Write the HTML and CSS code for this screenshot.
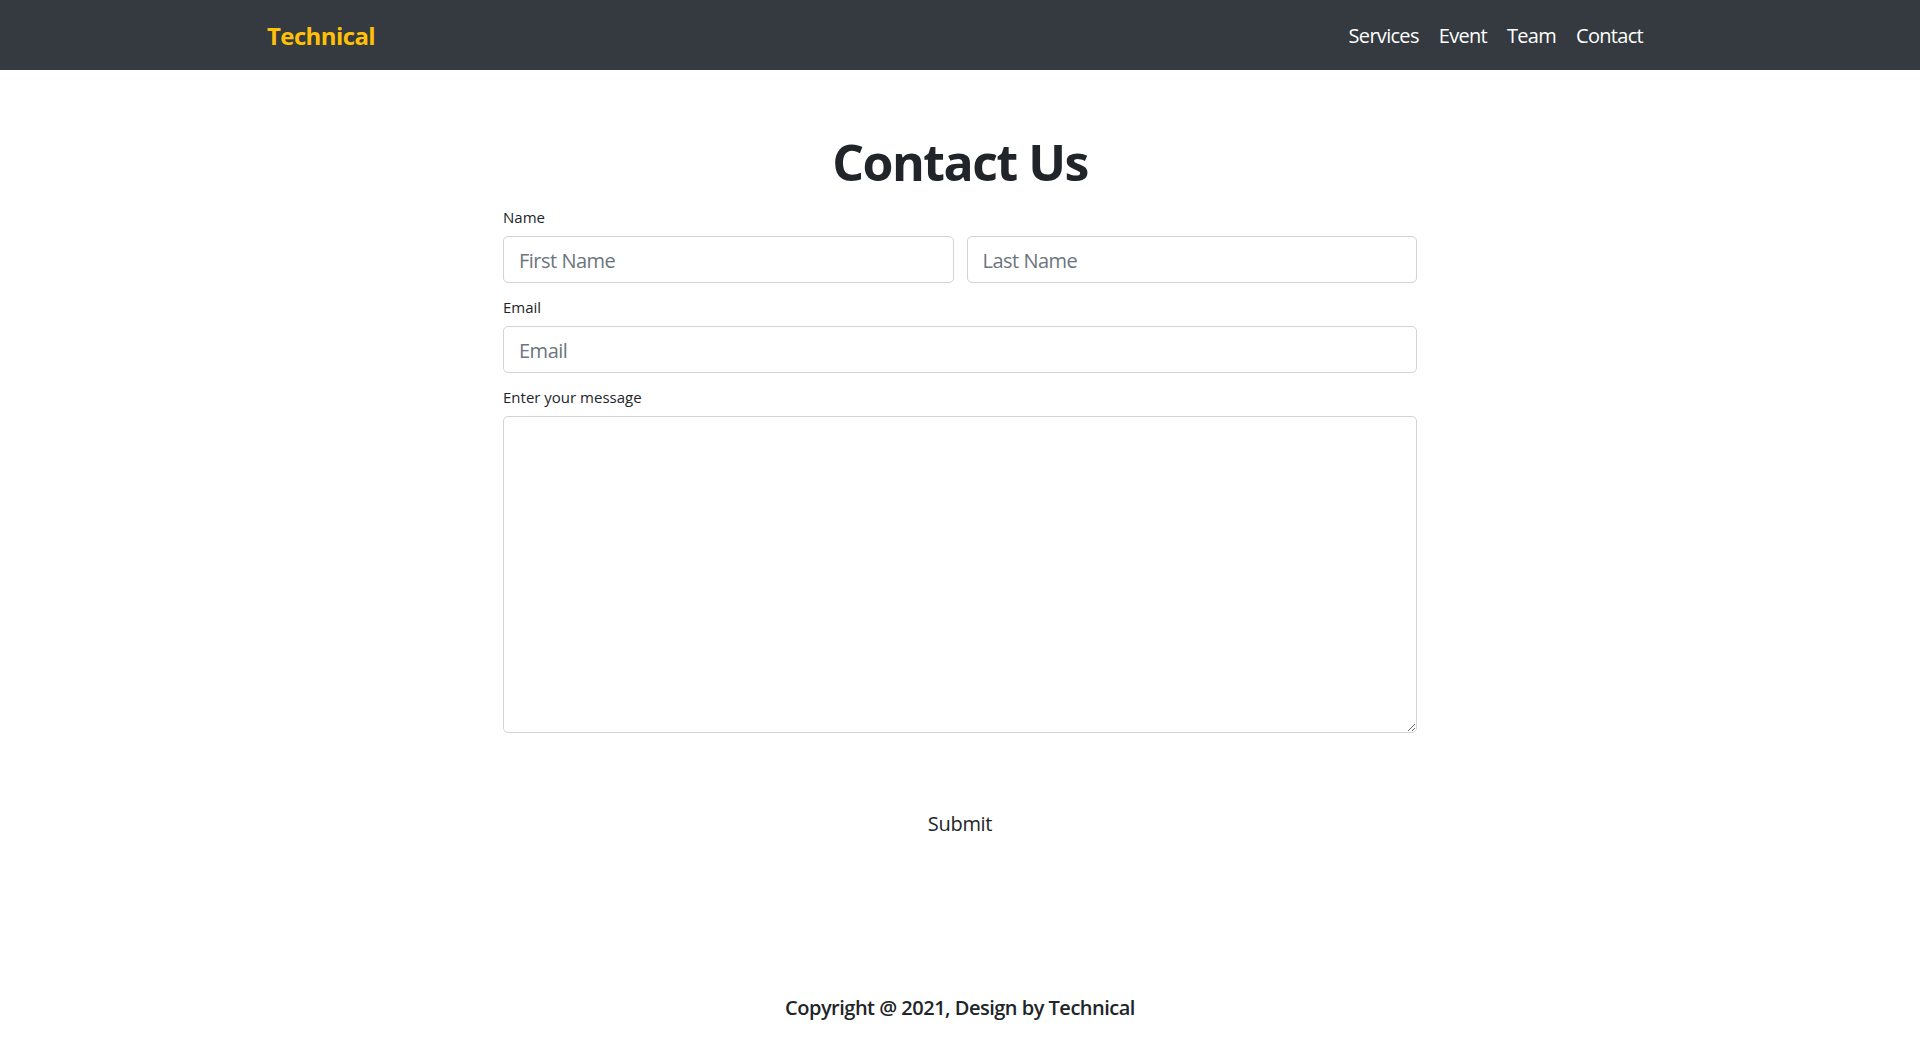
FILE: index.html
```html
<!DOCTYPE html>
<html lang="en">
<head>
<meta charset="utf-8">
<title>Contact Us - Technical</title>
<link rel="stylesheet" href="styles.css">
</head>
<body>
<nav class="navbar">
  <div class="nav-inner">
    <a class="brand" href="#">Technical</a>
    <ul class="nav-links">
      <li><a href="#">Services</a></li>
      <li><a href="#">Event</a></li>
      <li><a href="#">Team</a></li>
      <li><a href="#">Contact</a></li>
    </ul>
  </div>
</nav>
<main class="contact">
  <h1 class="title">Contact Us</h1>
  <form class="form">
    <div class="group">
      <label class="label">Name</label>
      <div class="row-2">
        <input class="control" type="text" placeholder="First Name">
        <input class="control" type="text" placeholder="Last Name">
      </div>
    </div>
    <div class="group">
      <label class="label">Email</label>
      <input class="control" type="email" placeholder="Email">
    </div>
    <div class="group">
      <label class="label">Enter your message</label>
      <textarea class="control area"></textarea>
    </div>
    <div class="submit-row">
      <button class="submit-btn" type="button">Submit</button>
    </div>
  </form>
</main>
<footer class="footer">
  <p class="copy">Copyright @ 2021, Design by Technical</p>
</footer>
</body>
</html>
```
FILE: styles.css
```css
* { box-sizing: border-box; }
html, body { margin: 0; padding: 0; }
body {
  font-family: "Open Sans", "Noto Sans", sans-serif;
  font-size: 20px;
  line-height: 1.5;
  color: #212529;
  background: #fff;
}
.navbar {
  background: #343a40;
  height: 70px;
}
.nav-inner {
  width: 1386px;
  height: 100%;
  margin: 0 auto;
  padding-top: 2px;
  display: flex;
  align-items: center;
  justify-content: space-between;
}
.brand {
  color: #ffc107;
  font-size: 24px;
  font-weight: 700;
  text-decoration: none;
  letter-spacing: -0.6px;
}
.nav-links {
  list-style: none;
  display: flex;
  margin: 0;
  padding: 0;
}
.nav-links a {
  display: block;
  padding: 10px 10px;
  color: #fff;
  text-decoration: none;
  font-size: 20px;
  letter-spacing: -0.7px;
}
.contact {
  width: 914px;
  margin: 0 auto;
}
.title {
  margin: 62px 0 14px;
  text-align: center;
  font-size: 50px;
  line-height: 1.2;
  font-weight: 700;
  letter-spacing: -1.5px;
  color: #212529;
}
.form { margin: 0; }
.group { margin-bottom: 13px; }
.label {
  display: block;
  font-size: 15px;
  line-height: 22px;
  margin-bottom: 8px;
  color: #212529;
}
.row-2 {
  display: grid;
  grid-template-columns: 1fr 1fr;
  gap: 13px;
}
.control {
  display: block;
  width: 100%;
  height: 47px;
  padding: 2px 15px 0;
  font-family: inherit;
  font-size: 20px;
  letter-spacing: -0.5px;
  color: #495057;
  background: #fff;
  border: 1px solid #ced4da;
  border-radius: 5px;
}
.control::placeholder { color: #6c757d; }
.area {
  height: 317px;
  padding: 8px 15px;
  resize: vertical;
}
.submit-row {
  text-align: center;
  margin-top: 67px;
}
.submit-btn {
  font-family: inherit;
  font-size: 20px;
  line-height: 30px;
  letter-spacing: -0.3px;
  padding: 8px 15px;
  color: #212529;
  background: transparent;
  border: 1px solid transparent;
  border-radius: 5px;
}
.footer {
  text-align: center;
  margin-top: 145px;
}
.copy {
  margin: 0;
  font-size: 20px;
  font-weight: 600;
  line-height: 30px;
  letter-spacing: -0.5px;
}
```
